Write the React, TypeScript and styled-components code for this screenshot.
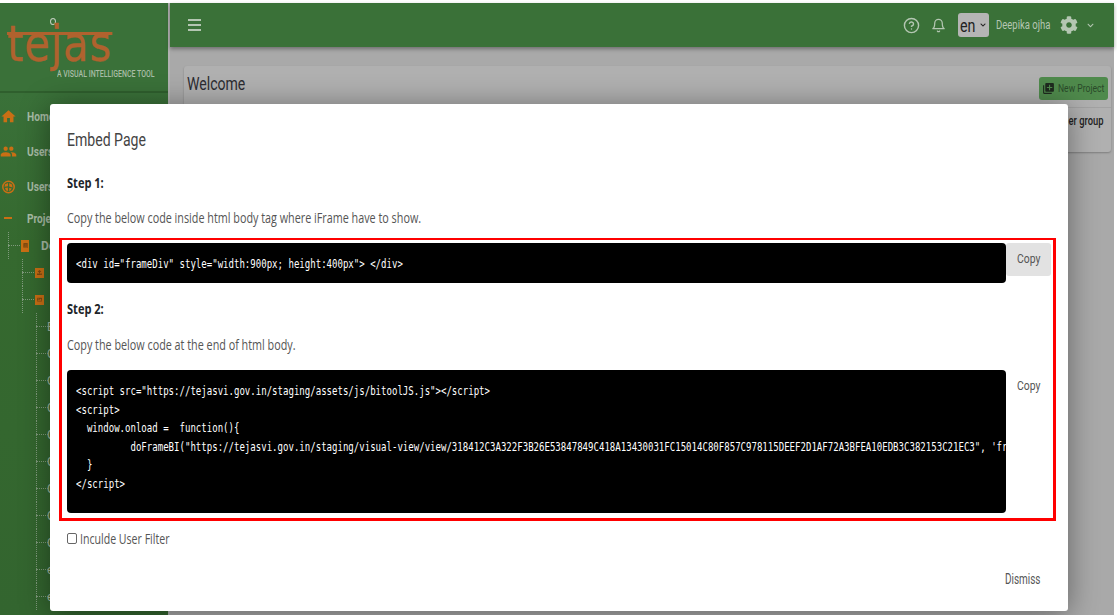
import React from 'react';
import styled, { createGlobalStyle } from 'styled-components';
import { FaBook, FaCog, FaChevronDown, FaUpload, FaImage } from 'react-icons/fa';
import { FiHelpCircle, FiBell } from 'react-icons/fi';
import { MdHome, MdPeople, MdLibraryAdd } from 'react-icons/md';

const GlobalStyle = createGlobalStyle`
  html, body {
    margin: 0;
    padding: 0;
    background: #fff;
  }
  body {
    font-family: "Open Sans", "Liberation Sans", sans-serif;
  }
`;

const treeFiles = ['E', 'C', 'C', 'C', 'C', 'C', 'C', 'C', 'C', 'e', 'e'];

const GroupDisc = () => (
  <svg width="13" height="14" viewBox="0 0 13 14" style={{ marginLeft: 2 }}>
    <circle cx="6.5" cy="7" r="5.7" fill="none" stroke="#c96f14" strokeWidth="1.5" />
    <path d="M3 4.2 L6 3 L6 6.2 L2.6 6.8 Z" fill="#c96f14" />
    <path d="M7.2 3 L10 4.4 L10.6 7.4 L7.2 6.6 Z" fill="#c96f14" />
    <path d="M3 8 L5.8 7.6 L6.2 11 L4 10.4 Z" fill="#c96f14" />
    <path d="M7.2 8 L9.8 8.6 L8.4 10.6 L7.2 11 Z" fill="#c96f14" />
  </svg>
);

const App = () => {
  return (
    <>
      <GlobalStyle />
      <Page>
        <Sidebar>
          <LogoArea>
            <LogoRing />
            <LogoWord>tejas</LogoWord>
            <LogoTag>A VISUAL INTELLIGENCE TOOL</LogoTag>
          </LogoArea>
          <NavList>
            <NavItem $h={35}>
              <NavIcon><MdHome /></NavIcon>
              <NavLabel>Home</NavLabel>
            </NavItem>
            <NavItem $h={35}>
              <NavIcon><MdPeople /></NavIcon>
              <NavLabel>Users</NavLabel>
            </NavItem>
            <NavItem $h={35}>
              <NavIcon><GroupDisc /></NavIcon>
              <NavLabel>Users</NavLabel>
            </NavItem>
            <NavItem $h={28}>
              <NavIcon><MinusBar /></NavIcon>
              <NavLabel>Projects</NavLabel>
            </NavItem>
          </NavList>
          <Tree>
            <TreeRow $depth={0}>
              <TreeIcon $w={8} $h={12}><FaBook /></TreeIcon>
              <TreeLabel $bold>De</TreeLabel>
            </TreeRow>
            <TreeRow $depth={1}>
              <TreeIcon $w={9} $h={10}><FaUpload /></TreeIcon>
            </TreeRow>
            <TreeRow $depth={1}>
              <TreeIcon $w={9} $h={10}><FaImage /></TreeIcon>
            </TreeRow>
            {treeFiles.map((letter, i) => (
              <TreeRow $depth={2} key={i}>
                <TreeLabel>{letter}</TreeLabel>
              </TreeRow>
            ))}
          </Tree>
        </Sidebar>
        <Main>
          <Header>
            <MenuIcon>
              <span />
              <span />
              <span />
            </MenuIcon>
            <HeaderRight>
              <HelpIcon><FiHelpCircle /></HelpIcon>
              <BellIcon><FiBell /></BellIcon>
              <LangSelect>
                <LangText>en</LangText>
                <FaChevronDown />
              </LangSelect>
              <UserName><Squeeze $x={0.76}>Deepika ojha</Squeeze></UserName>
              <GearIcon><FaCog /></GearIcon>
              <CaretIcon><FaChevronDown /></CaretIcon>
            </HeaderRight>
          </Header>
          <Content>
            <Card>
              <CardHead>
                <CardTitle><Squeeze $x={0.74}>Welcome</Squeeze></CardTitle>
                <NewProject>
                  <MdLibraryAdd />
                  <Squeeze $x={0.78}>New Project</Squeeze>
                </NewProject>
              </CardHead>
              <CardBody>
                <CardBodyText>er group</CardBodyText>
              </CardBody>
            </Card>
          </Content>
        </Main>
        <Modal>
          <ModalTitle><Squeeze $x={0.74}>Embed Page</Squeeze></ModalTitle>
          <StepTitle $top={25}><Squeeze $x={0.79}>Step 1:</Squeeze></StepTitle>
          <StepText $top={17}><Squeeze $x={0.771}>Copy the below code inside html body tag where iFrame have to show.</Squeeze></StepText>
          <RedFrame>
            <CodeRow>
              <CodeBlock $h={40}>
                <CodeLine>{'<div id="frameDiv" style="width:900px; height:400px"> </div>'}</CodeLine>
              </CodeBlock>
              <CopyButton $active><Squeeze $x={0.8}>Copy</Squeeze></CopyButton>
            </CodeRow>
            <StepTitle $top={18}><Squeeze $x={0.79}>Step 2:</Squeeze></StepTitle>
            <StepText $top={18}><Squeeze $x={0.771}>Copy the below code at the end of html body.</Squeeze></StepText>
            <CodeRow $top={15}>
              <CodeBlock $h={143}>
                <CodeLine>{'<script src="https://tejasvi.gov.in/staging/assets/js/bitoolJS.js"></script>'}</CodeLine>
                <CodeLine>{'<script>'}</CodeLine>
                <CodeLine>{'  window.onload =  function(){'}</CodeLine>
                <CodeLine>{'          doFrameBI("https://tejasvi.gov.in/staging/visual-view/view/318412C3A322F3B26E53847849C418A13430031FC15014C80F857C978115DEEF2D1AF72A3BFEA10EDB3C382153C21EC3", \'frameDiv\');'}</CodeLine>
                <CodeLine>{'  }'}</CodeLine>
                <CodeLine>{'</script>'}</CodeLine>
              </CodeBlock>
              <CopyButton><Squeeze $x={0.8}>Copy</Squeeze></CopyButton>
            </CodeRow>
          </RedFrame>
          <FilterRow>
            <FilterBox />
            <Squeeze $x={0.756}>Inculde User Filter</Squeeze>
          </FilterRow>
          <ModalFooter>
            <Squeeze $x={0.71}>Dismiss</Squeeze>
          </ModalFooter>
        </Modal>
      </Page>
    </>
  );
};

export default App;

const Page = styled.div`
  position: relative;
  width: 1117px;
  height: 615px;
  overflow: hidden;
  display: flex;
  box-sizing: border-box;
  padding: 3px 3px 0 0;
  background: #fff;
`;

// the whole reference is squashed sideways, so text is narrowed on its own
const Squeeze = styled.span<{ $x: number }>`
  display: inline-block;
  white-space: nowrap;
  transform: scaleX(${(p) => p.$x});
  transform-origin: left center;
`;

const Sidebar = styled.div`
  width: 170px;
  flex-shrink: 0;
  box-sizing: border-box;
  border-right: 2px solid #b2b2b2;
  background-image: linear-gradient(to bottom, #3a7139 0, #3a7139 90px, #35692f 240px, #33652f 100%);
  overflow: hidden;
`;

const LogoArea = styled.div`
  position: relative;
  height: 90px;
  box-sizing: border-box;
  border-bottom: 2px solid #2f5f2d;
  padding: 29px 0 0 7px;
`;

const LogoRing = styled.div`
  position: absolute;
  left: 50px;
  top: 15px;
  width: 4px;
  height: 5px;
  border: 1.5px solid #c2cdbf;
  border-radius: 50%;
`;

const LogoWord = styled.div`
  display: inline-block;
  font-family: "DejaVu Sans", sans-serif;
  font-size: 49px;
  line-height: 20px;
  color: #b0622e;
  -webkit-text-stroke: 0.3px #b0622e;
  letter-spacing: 1px;
  transform: scaleX(0.85);
  transform-origin: left top;
  border-top: 3px solid #b0622e;
`;

const LogoTag = styled.div`
  position: absolute;
  left: 57px;
  top: 66px;
  font-family: Roboto, sans-serif;
  font-size: 9px;
  font-weight: 500;
  white-space: nowrap;
  color: #a9bda6;
  transform: scaleX(0.776);
  transform-origin: left top;
`;

const NavList = styled.div`
  padding-top: 6px;
`;

const NavItem = styled.div<{ $h: number }>`
  height: ${(p) => p.$h}px;
  display: flex;
  align-items: center;
`;

const NavIcon = styled.div`
  width: 27px;
  display: flex;
  align-items: center;
  color: #c96f14;
  font-size: 17px;
`;

const MinusBar = styled.div`
  width: 8px;
  height: 2px;
  margin-left: 4px;
  background: #c96f14;
`;

const NavLabel = styled.div`
  font-family: Roboto, sans-serif;
  font-size: 13px;
  font-weight: 700;
  color: #a9bda6;
  transform: scaleX(0.78);
  transform-origin: left center;
`;

const Tree = styled.div`
  display: flex;
  flex-direction: column;
`;

const TreeRow = styled.div<{ $depth: number }>`
  position: relative;
  height: 27px;
  display: flex;
  align-items: center;
  padding-left: ${(p) => 21 + p.$depth * 14}px;

  &::before {
    content: '';
    position: absolute;
    left: ${(p) => 8 + p.$depth * 14}px;
    top: 0;
    bottom: 0;
    border-left: 1px dotted #7f9a7c;
  }

  &::after {
    content: '';
    position: absolute;
    left: ${(p) => 8 + p.$depth * 14}px;
    width: 12px;
    top: 13px;
    border-top: 1px dotted #7f9a7c;
  }
`;

const TreeIcon = styled.div<{ $w: number; $h: number }>`
  width: ${(p) => p.$w}px;
  height: ${(p) => p.$h}px;
  background: #c96f14;
  display: flex;
  align-items: center;
  justify-content: center;
  font-size: 5px;
  color: #7f4a10;
`;

const TreeLabel = styled.div<{ $bold?: boolean }>`
  margin-left: ${(p) => (p.$bold ? 12 : -2)}px;
  font-family: Roboto, sans-serif;
  font-size: 12px;
  font-weight: ${(p) => (p.$bold ? 700 : 400)};
  color: #a9bda6;
`;

const Main = styled.div`
  flex: 1;
  display: flex;
  flex-direction: column;
  background: #a9a9a9;
`;

const Header = styled.div`
  height: 44px;
  flex-shrink: 0;
  display: flex;
  align-items: center;
  justify-content: space-between;
  padding: 0 20px 0 18px;
  background: #3a7138;
  box-shadow: 0 2px 4px rgba(0, 0, 0, 0.35);
`;

const MenuIcon = styled.div`
  display: flex;
  flex-direction: column;
  gap: 3px;

  span {
    display: block;
    width: 13px;
    height: 2px;
    background: #b4c6b2;
  }
`;

const HeaderRight = styled.div`
  display: flex;
  align-items: center;
  color: #b4c6b2;
`;

const HelpIcon = styled.div`
  display: flex;
  font-size: 17px;
`;

const BellIcon = styled.div`
  display: flex;
  font-size: 15px;
  margin-left: 11px;
`;

const LangSelect = styled.div`
  display: flex;
  align-items: center;
  box-sizing: border-box;
  width: 31px;
  height: 24px;
  margin-left: 12px;
  padding-left: 2px;
  border-radius: 3px;
  background: #b5b5b5;
  color: #222;

  svg {
    font-size: 6px;
    margin-left: 1px;
  }
`;

const LangText = styled.span`
  display: inline-block;
  width: 19px;
  font-family: Roboto, sans-serif;
  font-size: 19px;
  transform: scaleX(0.75);
  transform-origin: left center;
`;

const UserName = styled.div`
  width: 54px;
  margin-left: 7px;
  font-family: Roboto, sans-serif;
  font-size: 12.5px;
  line-height: 16px;
`;

const GearIcon = styled.div`
  display: flex;
  font-size: 18px;
  margin-left: 10px;
`;

const CaretIcon = styled.div`
  display: flex;
  font-size: 7px;
  margin-left: 9px;
`;

const Content = styled.div`
  flex: 1;
  padding: 19px 3px 0 14px;
`;

const Card = styled.div`
  height: 86px;
  border-radius: 3px;
  background: #b0b0b0;
  box-shadow: 0 1px 2px rgba(0, 0, 0, 0.25);
`;

const CardHead = styled.div`
  height: 41px;
  display: flex;
  align-items: flex-start;
  justify-content: space-between;
  padding: 0 3px 0 3px;
  border-bottom: 1px solid #a2a2a2;
`;

const CardTitle = styled.div`
  margin-top: 6px;
  font-family: Roboto, sans-serif;
  font-size: 19px;
  line-height: 24px;
  color: #2c2c30;
`;

const NewProject = styled.div`
  display: flex;
  align-items: center;
  gap: 3px;
  box-sizing: border-box;
  width: 69px;
  height: 23px;
  margin-top: 11px;
  padding-left: 3px;
  border-radius: 3px;
  background: #4f8a4c;
  color: #2a4a2a;
  font-family: Roboto, sans-serif;
  font-size: 11px;
  overflow: hidden;

  svg {
    flex-shrink: 0;
    font-size: 13px;
    color: #1e2a1e;
  }
`;

const CardBody = styled.div`
  display: flex;
  justify-content: flex-end;
  padding: 5px 7px 0 0;
`;

const CardBodyText = styled.div`
  font-family: Roboto, sans-serif;
  font-size: 13px;
  font-weight: 500;
  color: #222;
  transform: scaleX(0.72);
  transform-origin: right center;
`;

const Modal = styled.div`
  position: absolute;
  left: 50px;
  top: 104px;
  width: 1018px;
  height: 507px;
  box-sizing: border-box;
  padding: 26px 0 0 17px;
  border-radius: 3px;
  background: #fff;
  box-shadow: 0 3px 30px rgba(0, 0, 0, 0.42);
  color: #444;
`;

const ModalTitle = styled.div`
  height: 20px;
  font-family: Roboto, sans-serif;
  font-size: 19px;
  line-height: 20px;
  color: #444;
`;

const StepTitle = styled.div<{ $top: number }>`
  margin-top: ${(p) => p.$top}px;
  font-size: 14px;
  font-weight: 700;
  line-height: 16px;
  color: #212529;
`;

const StepText = styled.div<{ $top: number }>`
  margin-top: ${(p) => p.$top}px;
  font-size: 14px;
  line-height: 20px;
  color: #555;
`;

const RedFrame = styled.div`
  box-sizing: border-box;
  width: 997px;
  height: 283px;
  margin: 10px 0 0 -8px;
  padding: 3px 0 0 5px;
  border: 3px solid #f00;
  border-top-width: 2px;
`;

const CodeRow = styled.div<{ $top?: number }>`
  display: flex;
  align-items: flex-start;
  margin-top: ${(p) => p.$top ?? 0}px;
`;

const CodeBlock = styled.div<{ $h: number }>`
  width: 939px;
  height: ${(p) => p.$h}px;
  box-sizing: border-box;
  padding: 12px 0 0 9px;
  border-radius: 4px;
  background: #000;
  overflow: hidden;
  flex-shrink: 0;
`;

const CodeLine = styled.div`
  width: 1240px;
  height: 18.6px;
  font-family: "DejaVu Sans Mono", monospace;
  font-size: 13px;
  line-height: 18.6px;
  white-space: pre;
  color: #fff;
  transform: scaleX(0.696);
  transform-origin: left center;
`;

const CopyButton = styled.div<{ $active?: boolean }>`
  width: 45px;
  height: 33px;
  box-sizing: border-box;
  padding-left: 11px;
  border-radius: 3px;
  background: ${(p) => (p.$active ? '#e2e2e2' : 'transparent')};
  font-family: Roboto, sans-serif;
  font-size: 13px;
  line-height: 31px;
  color: #555;
`;

const FilterRow = styled.div`
  display: flex;
  align-items: center;
  margin-top: 7px;
  height: 20px;
  font-size: 14px;
  color: #555;
`;

const FilterBox = styled.div`
  width: 8px;
  height: 9px;
  margin-right: 3px;
  border: 1px solid #666;
  border-radius: 2px;
`;

const ModalFooter = styled.div`
  margin: 23px 0 0 938px;
  font-family: Roboto, sans-serif;
  font-size: 14px;
  color: #555;
`;
